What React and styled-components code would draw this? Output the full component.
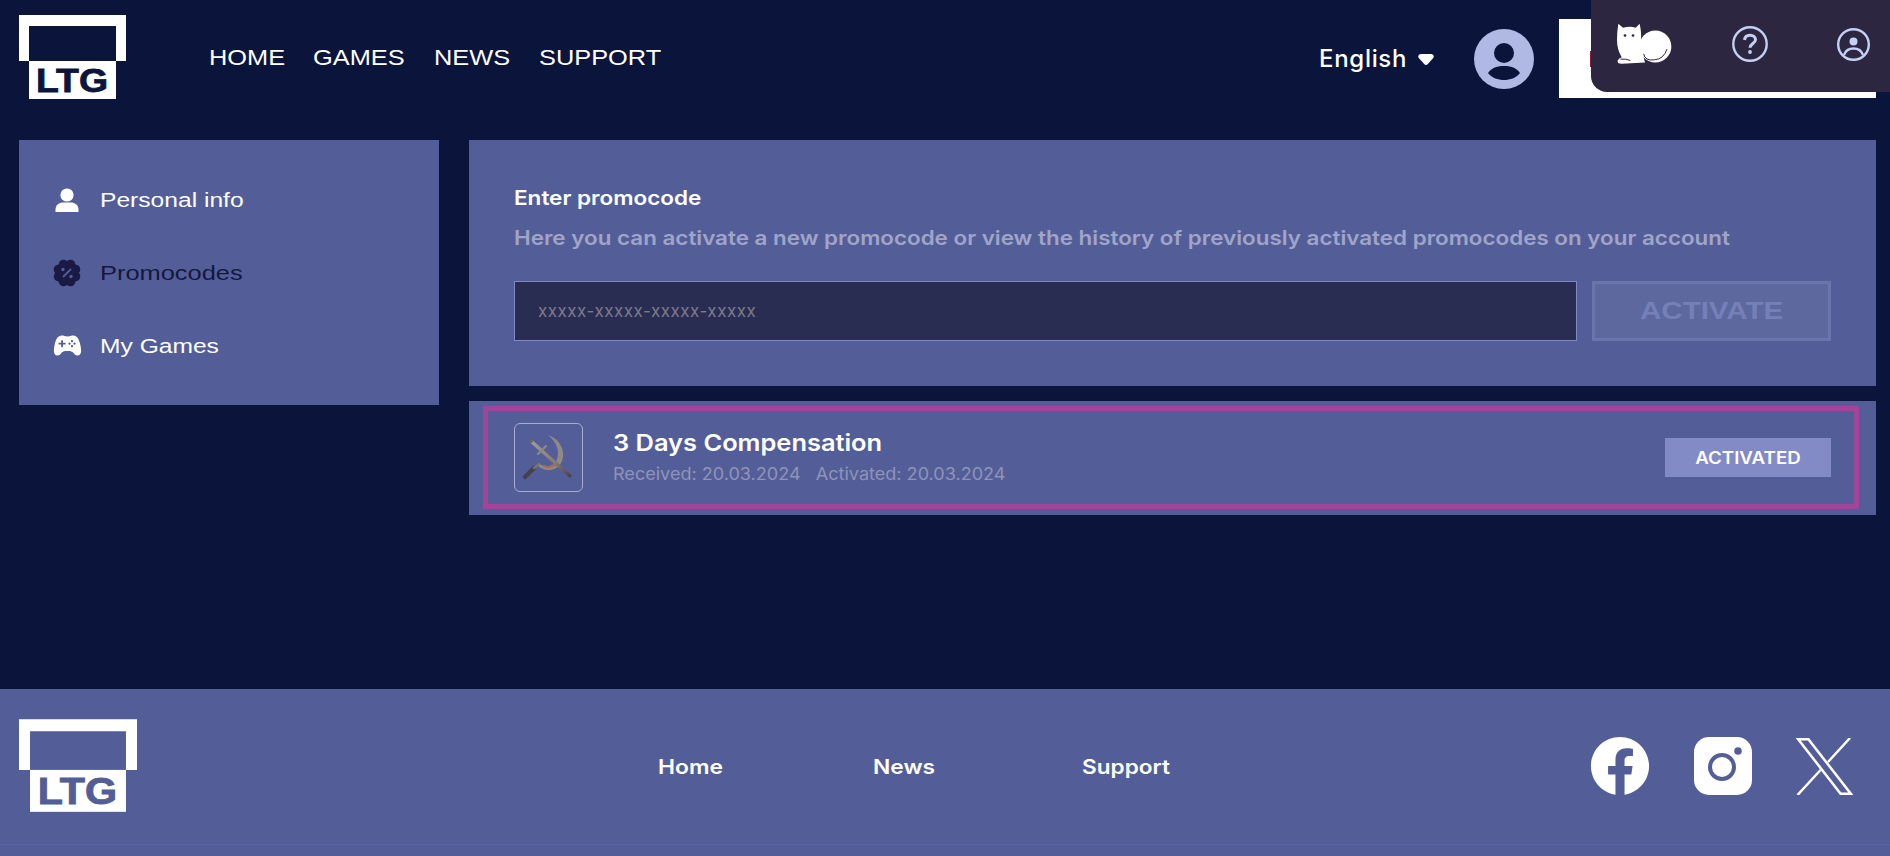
import React from "react";
import styled, { createGlobalStyle } from "styled-components";
import { FaFacebook } from "react-icons/fa";
import { IoGameController } from "react-icons/io5";

const NAVY = "#0b143b";
const CARD = "#535e99";

const GlobalStyle = createGlobalStyle`
	html, body {
		margin: 0;
		padding: 0;
		background: ${NAVY};
		overflow: hidden;
	}
`;

function Logo({ width, height, ink }) {
	return (
		<svg width={width} height={height} viewBox="0 0 107 84" style={{ display: "block" }}>
			<path fill="#fff" d="M0 0H107V46H97V11H10V46H0Z" />
			<rect x="10" y="46" width="87" height="38" fill="#fff" />
			<text
				x="17"
				y="77"
				fontFamily="Liberation Sans"
				fontWeight="700"
				fontSize="33"
				fill={ink}
				stroke={ink}
				strokeWidth="0.8"
				textLength="72"
				lengthAdjust="spacingAndGlyphs"
			>
				LTG
			</text>
		</svg>
	);
}

function Avatar() {
	return (
		<svg width="60" height="60" viewBox="0 0 60 60" style={{ display: "block" }}>
			<circle cx="30" cy="30" r="30" fill="#b0b8e4" />
			<circle cx="30" cy="24" r="10" fill={NAVY} />
			<path fill={NAVY} d="M14 44C18 38 24 37 30 37C36 37 42 38 46 44C42 49 36 51 30 51C24 51 18 49 14 44Z" />
		</svg>
	);
}

function Cat() {
	return (
		<svg width="55" height="42" viewBox="0 0 165 125" style={{ display: "block" }}>
			<circle cx="115" cy="70" r="48" fill="#fff" />
			<path
				fill="#fff"
				d="M4 2L18 14Q40 8 56 14L68 2Q74 30 72 50Q76 90 84 118L14 122Q0 122 2 112Q6 104 14 102Q0 80 0 50Q0 25 4 2Z"
			/>
			<path fill="none" stroke="#2d2640" strokeWidth="3" d="M80 92Q84 114 112 110Q140 108 150 78" />
			<path fill="none" stroke="#2d2640" strokeWidth="3" d="M10 108Q26 106 40 112" />
			<circle cx="24" cy="37" r="4" fill="#2d2640" />
			<circle cx="48" cy="37" r="4" fill="#2d2640" />
		</svg>
	);
}

function HelpIcon() {
	return (
		<svg width="36" height="36" viewBox="0 0 36 36" fill="none" stroke="#c5d0f5" style={{ display: "block" }}>
			<circle cx="18" cy="18" r="16.7" strokeWidth="2.4" />
			<path strokeWidth="3" d="M12.5 14C12.8 10.8 15 9.2 18 9.2C21.2 9.2 23.5 11 23.5 13.8C23.5 17.4 18 17.8 18 21.8" />
			<circle cx="18" cy="26" r="1.9" fill="#c5d0f5" stroke="none" />
		</svg>
	);
}

function ProfileIcon() {
	return (
		<svg width="33" height="33" viewBox="0 0 33 33" fill="none" stroke="#c5d0f5" style={{ display: "block" }}>
			<circle cx="16.5" cy="16.5" r="15.3" strokeWidth="2.4" />
			<circle cx="16.5" cy="13.5" r="4" fill="#c5d0f5" stroke="none" />
			<path strokeWidth="2.4" d="M7 27C8.5 22.5 12 20.5 16.5 20.5C21 20.5 24.5 22.5 26 27" />
		</svg>
	);
}

function PersonIcon() {
	return (
		<svg width="24" height="24" viewBox="0 0 24 24" fill="#fff" style={{ display: "block" }}>
			<circle cx="12" cy="7" r="6.6" />
			<path d="M0.5 24V21.5C0.5 17 4.5 14.5 8 14.5H16C19.5 14.5 23.5 17 23.5 21.5V24Z" />
		</svg>
	);
}

const LOBES = [0, 45, 90, 135, 180, 225, 270, 315];

function BadgeIcon() {
	return (
		<svg width="28" height="28" viewBox="0 0 28 28" style={{ display: "block" }}>
			<g fill="#1a1a44">
				<circle cx="14" cy="14" r="12" />
				{LOBES.map((a) => (
					<circle
						key={a}
						cx={14 + 9.2 * Math.cos((a * Math.PI) / 180 + 0.39)}
						cy={14 + 9.2 * Math.sin((a * Math.PI) / 180 + 0.39)}
						r="4.8"
					/>
				))}
			</g>
			<path stroke={CARD} strokeWidth="1.8" d="M10 18L18 10" />
			<circle cx="10" cy="10.5" r="1.7" fill={CARD} />
			<circle cx="18" cy="17.5" r="1.7" fill={CARD} />
		</svg>
	);
}

function HammerSickle() {
	return (
		<svg width="58" height="52" viewBox="0 0 58 52" fill="none" strokeLinecap="round" style={{ display: "block" }}>
			<defs>
				<linearGradient id="metal" x1="0" y1="0" x2="1" y2="1">
					<stop offset="0" stopColor="#a09c98" />
					<stop offset="0.6" stopColor="#8a7a70" />
					<stop offset="1" stopColor="#4a4650" />
				</linearGradient>
			</defs>
			<path fill="#8f8a85" d="M28 3C39 7 44 16 43 25C42 33 36 38 29 38C24 38 20 36 17 33L19 31C22 34 26 35 29 34C35 33 38 28 38 21C38 14 34 8 28 3Z" />
			<path stroke="#a86a55" strokeWidth="2" d="M24 34C28 36 33 35 37 31" />
			<path stroke="#45424e" strokeWidth="4.5" d="M5 45L14 36" />
			<path stroke="#7d7468" strokeWidth="2.5" d="M14 36L19 32" />
			<path stroke="url(#metal)" strokeWidth="3.4" d="M12 10L50 44" />
			<path stroke="#8f877c" strokeWidth="2.4" d="M18 22L26 14" />
			<circle cx="11" cy="9" r="2" fill="#6c6668" />
		</svg>
	);
}

function InstagramIcon() {
	return (
		<svg width="58" height="58" viewBox="0 0 58 58" style={{ display: "block" }}>
			<rect width="58" height="58" rx="15" fill="#fff" />
			<circle cx="28" cy="30" r="12" fill="none" stroke={CARD} strokeWidth="4" />
			<circle cx="44" cy="14" r="3.8" fill={CARD} />
		</svg>
	);
}

function XIcon() {
	return (
		<svg width="57" height="57" viewBox="0 0 57 57" fill="none" stroke="#fff" strokeWidth="2.5" style={{ display: "block" }}>
			<path d="M2.2 1.2H12.4L54.8 55.8H44.6Z" />
			<path d="M54 0L32 24M24.5 32L1.5 57" />
		</svg>
	);
}

function App() {
	return (
		<Page>
			<GlobalStyle />
			<Header>
				<Logo width={107} height={84} ink={NAVY} />
				<Nav>
					<NavLink $w={75}><Stretch $x={1.18}>HOME</Stretch></NavLink>
					<NavLink $w={92}><Stretch $x={1.18}>GAMES</Stretch></NavLink>
					<NavLink $w={76}><Stretch $x={1.18}>NEWS</Stretch></NavLink>
					<NavLink $w={120}><Stretch $x={1.18}>SUPPORT</Stretch></NavLink>
				</Nav>
				<HeaderRight>
					<Language>
						English
						<Caret width="16" height="11" viewBox="0 0 16 11">
							<path fill="#fff" d="M3 0H13C15.5 0 16.5 2.5 15 4.2L9.6 10.2C8.7 11.2 7.3 11.2 6.4 10.2L1 4.2C-.5 2.5.5 0 3 0Z" />
						</Caret>
					</Language>
					<Avatar />
					<WhiteButton>
						<ButtonEdge />
					</WhiteButton>
				</HeaderRight>
			</Header>

			<Body>
				<Sidebar>
					<SideItem>
						<SideIcon><PersonIcon /></SideIcon>
						<SideLabel $x={1.2}>Personal info</SideLabel>
					</SideItem>
					<SideItem $active>
						<SideIcon><BadgeIcon /></SideIcon>
						<SideLabel $x={1.24}>Promocodes</SideLabel>
					</SideItem>
					<SideItem>
						<SideIcon><IoGameController size={29} color="#fff" /></SideIcon>
						<SideLabel $x={1.2}>My Games</SideLabel>
					</SideItem>
				</Sidebar>

				<Content>
					<PromoCard>
						<PromoTitle><BodyStretch $x={1.125}>Enter promocode</BodyStretch></PromoTitle>
						<PromoText>
							<BodyStretch $x={1.12}>
								Here you can activate a new promocode or view the history of previously activated promocodes on your account
							</BodyStretch>
						</PromoText>
						<PromoForm>
							<CodeInput placeholder="xxxxx-xxxxx-xxxxx-xxxxx" />
							<ActivateButton disabled>
								<ActivateLabel $x={1.23}>ACTIVATE</ActivateLabel>
							</ActivateButton>
						</PromoForm>
					</PromoCard>

					<HistoryCard>
						<HistoryRow>
							<Thumb><HammerSickle /></Thumb>
							<HistoryInfo>
								<HistoryTitle><BodyStretch $x={1.105}>3 Days Compensation</BodyStretch></HistoryTitle>
								<HistoryMeta>
									<BodyStretch $x={1.062}>Received: 20.03.2024&nbsp;&nbsp;&nbsp;Activated: 20.03.2024</BodyStretch>
								</HistoryMeta>
							</HistoryInfo>
							<StatusBadge><BadgeText $x={1.1}>ACTIVATED</BadgeText></StatusBadge>
						</HistoryRow>
					</HistoryCard>
				</Content>
			</Body>

			<Footer>
				<FooterRow>
					<Logo width={118} height={93} ink={CARD} />
					<FooterLinks>
						<FooterLink $w={65}><BodyStretch $x={1.14}>Home</BodyStretch></FooterLink>
						<FooterLink $w={59}><BodyStretch $x={1.14}>News</BodyStretch></FooterLink>
						<FooterLink $w={88}><BodyStretch $x={1.13}>Support</BodyStretch></FooterLink>
					</FooterLinks>
					<Socials>
						<FaFacebook size={60} color="#fff" />
						<InstagramIcon />
						<XIcon />
					</Socials>
				</FooterRow>
			</Footer>

			<Overlay>
				<Cat />
				<HelpIcon />
				<ProfileIcon />
			</Overlay>
		</Page>
	);
}

const Page = styled.div`
	position: relative;
	display: flex;
	flex-direction: column;
	width: 1890px;
	height: 856px;
	overflow: hidden;
	background: ${NAVY};
	color: #fff;
	font-family: "Inter", "Liberation Sans", sans-serif;
`;

const Header = styled.header`
	display: flex;
	align-items: center;
	height: 125px;
	box-sizing: border-box;
	padding: 15px 14px 26px 19px;
`;

const Nav = styled.nav`
	display: flex;
	gap: 29px;
	margin: 2px 0 0 83px;
	font-family: "Liberation Sans", sans-serif;
	font-size: 21.5px;
`;

const NavLink = styled.a`
	display: block;
	width: ${(p) => p.$w}px;
	white-space: nowrap;
`;

/* the original typefaces are wider than anything installed, so stretch the glyphs */
const Stretch = styled.span`
	display: inline-block;
	font-family: "Liberation Sans", sans-serif;
	white-space: nowrap;
	transform: scaleX(${(p) => p.$x});
	transform-origin: left center;
`;

const BodyStretch = styled(Stretch)`
	font-family: "Inter", sans-serif;
`;

const HeaderRight = styled.div`
	display: flex;
	align-items: center;
	margin: 3px 0 0 auto;
`;

const Language = styled.div`
	display: flex;
	align-items: center;
	justify-content: space-between;
	width: 115px;
	margin-right: 40px;
	font-size: 24px;
	font-weight: 500;
	letter-spacing: 0.7px;
`;

const Caret = styled.svg`
	display: block;
	margin-top: 2px;
`;

const WhiteButton = styled.div`
	display: flex;
	align-items: center;
	width: 317px;
	height: 79px;
	box-sizing: border-box;
	margin-left: 25px;
	padding-left: 31px;
	background: #fff;
`;

const ButtonEdge = styled.span`
	width: 2px;
	height: 16px;
	background: #8b1a3a;
`;

const Overlay = styled.div`
	position: absolute;
	top: 0;
	right: 0;
	display: flex;
	align-items: center;
	gap: 60px;
	width: 299px;
	height: 92px;
	box-sizing: border-box;
	padding: 0 0 4px 26px;
	background: #2d2640;
	border-bottom-left-radius: 16px;

	& > svg:last-child {
		margin-left: 9px;
	}
`;

const Body = styled.main`
	display: grid;
	grid-template-columns: 420px 1407px;
	gap: 30px;
	align-items: start;
	padding: 15px 14px 0 19px;
`;

const Sidebar = styled.aside`
	display: flex;
	flex-direction: column;
	height: 265px;
	box-sizing: border-box;
	padding: 23px 0 0 31px;
	background: ${CARD};
`;

const SideItem = styled.a`
	display: flex;
	align-items: center;
	height: 73px;
	font-size: 20.5px;
	color: ${(p) => (p.$active ? "#14183f" : "#fff")};
`;

const SideIcon = styled.span`
	display: flex;
	align-items: center;
	justify-content: center;
	width: 34px;
	margin-right: 16px;
`;

const SideLabel = styled(Stretch)``;

const Content = styled.section`
	display: flex;
	flex-direction: column;
	gap: 15px;
`;

const PromoCard = styled.div`
	height: 246px;
	box-sizing: border-box;
	padding: 46px 45px 0;
	background: ${CARD};
`;

const PromoTitle = styled.h2`
	margin: 0 0 17px 0;
	font-size: 20px;
	font-weight: 600;
	line-height: 24px;
`;

const PromoText = styled.p`
	margin: 0 0 32px 0;
	font-size: 20px;
	font-weight: 600;
	line-height: 22px;
	color: #a0a5c8;
	white-space: nowrap;
`;

const PromoForm = styled.div`
	display: flex;
	gap: 15px;
`;

const CodeInput = styled.input`
	width: 1063px;
	height: 60px;
	box-sizing: border-box;
	padding: 0 23px;
	background: #2a2d52;
	border: 1px solid #8088c8;
	outline: none;
	font-family: "Inter", sans-serif;
	font-size: 17px;
	letter-spacing: 0.5px;
	color: #fff;

	&::placeholder {
		color: #7d7a8c;
		opacity: 1;
	}
`;

const ActivateButton = styled.button`
	display: flex;
	align-items: center;
	width: 239px;
	height: 60px;
	box-sizing: border-box;
	padding: 0 0 0 45px;
	background: #5d689f;
	border: 3px solid #6b75ad;
`;

const ActivateLabel = styled(Stretch)`
	font-size: 24px;
	font-weight: 700;
	color: #7580b8;
`;

const HistoryCard = styled.div`
	padding: 5px 17px 6px 14px;
	background: ${CARD};
`;

const HistoryRow = styled.div`
	display: flex;
	align-items: center;
	height: 103px;
	box-sizing: border-box;
	padding: 0 23px 0 26px;
	border: 5px solid #a0459a;
`;

const Thumb = styled.div`
	display: flex;
	align-items: center;
	justify-content: center;
	width: 69px;
	height: 69px;
	box-sizing: border-box;
	border: 1px solid #a8acd0;
	border-radius: 6px;
`;

const HistoryInfo = styled.div`
	display: flex;
	flex-direction: column;
	gap: 6px;
	margin: -1px 0 0 30px;
`;

const HistoryTitle = styled.div`
	font-size: 23px;
	font-weight: 600;
	line-height: 28px;
`;

const HistoryMeta = styled.div`
	font-size: 17px;
	line-height: 22px;
	color: #9093b6;
`;

const StatusBadge = styled.div`
	display: flex;
	align-items: center;
	justify-content: center;
	width: 166px;
	height: 39px;
	margin-left: auto;
	background: #828bc6;
	font-size: 17px;
	font-weight: 600;
`;

const BadgeText = styled(BodyStretch)`
	transform-origin: center;
`;

const Footer = styled.footer`
	height: 167px;
	margin-top: auto;
	background: ${CARD};
`;

const FooterRow = styled.div`
	display: flex;
	align-items: flex-start;
	height: 156px;
	box-sizing: border-box;
	padding: 30px 37px 0 19px;
	border-bottom: 1px solid #5761a3;
`;

const FooterLinks = styled.nav`
	display: flex;
	align-items: center;
	gap: 150px;
	height: 60px;
	margin: 18px 0 0 521px;
`;

const FooterLink = styled.a`
	display: block;
	width: ${(p) => p.$w}px;
	font-size: 20px;
	font-weight: 600;
`;

const Socials = styled.div`
	display: flex;
	align-items: center;
	gap: 44px;
	height: 60px;
	margin: 17px 0 0 auto;
`;

export default App;
